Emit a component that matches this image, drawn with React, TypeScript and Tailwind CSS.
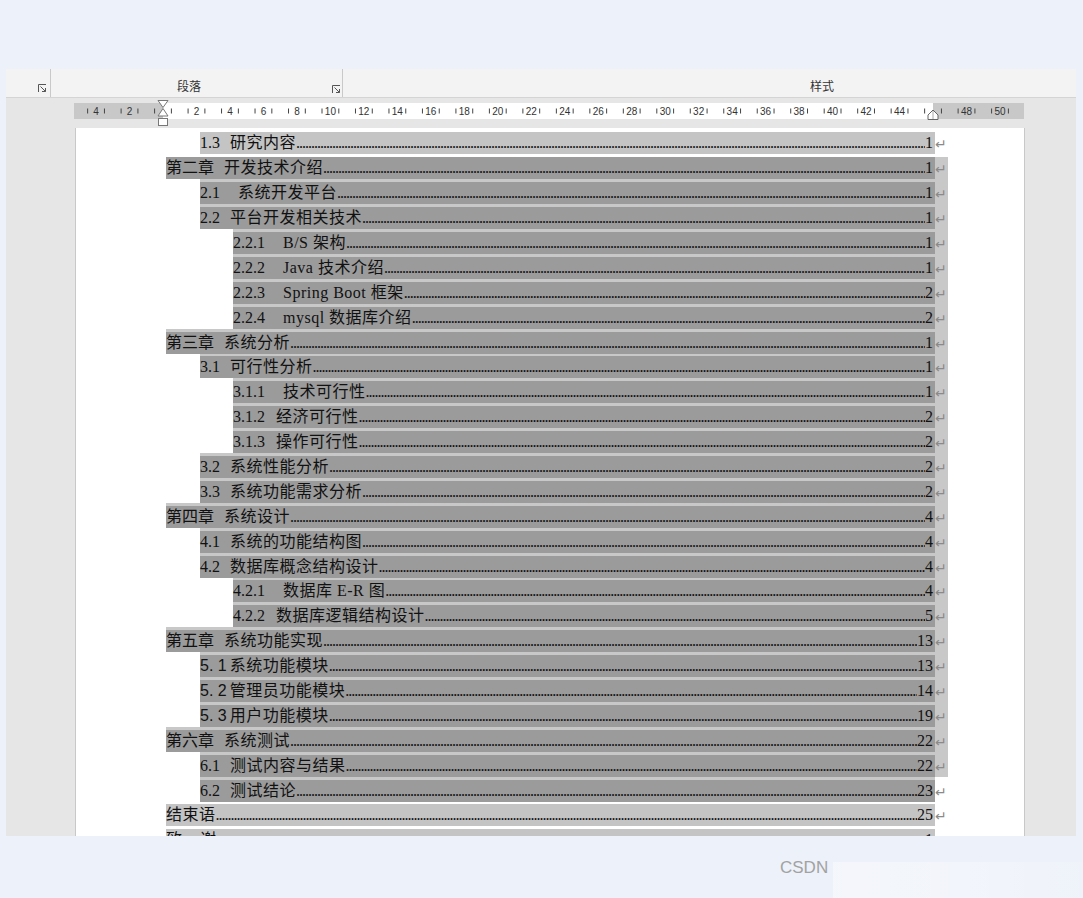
import React from 'react';

type Row = {
  lvl: 1 | 2 | 3;
  num?: string;
  gap?: string;
  sans?: boolean;
  title: string;
  page: string;
  band: 'dark' | 'light';
  top: 'white' | 'light';
  sel: boolean;
};

const rows: Row[] = [
  { lvl: 2, num: '1.3', gap: 'mr-[10px]', title: '研究内容', page: '1', band: 'light', top: 'white', sel: false },
  { lvl: 1, num: '第二章', gap: 'mr-[10px]', title: '开发技术介绍', page: '1', band: 'dark', top: 'white', sel: true },
  { lvl: 2, num: '2.1', gap: 'mr-[18px]', title: '系统开发平台', page: '1', band: 'dark', top: 'light', sel: true },
  { lvl: 2, num: '2.2', gap: 'mr-[10px]', title: '平台开发相关技术', page: '1', band: 'dark', top: 'light', sel: true },
  { lvl: 3, num: '2.2.1', gap: 'mr-[18px]', title: 'B/S 架构', page: '1', band: 'dark', top: 'light', sel: true },
  { lvl: 3, num: '2.2.2', gap: 'mr-[18px]', title: 'Java 技术介绍', page: '1', band: 'dark', top: 'light', sel: true },
  { lvl: 3, num: '2.2.3', gap: 'mr-[18px]', title: 'Spring Boot 框架', page: '2', band: 'dark', top: 'light', sel: true },
  { lvl: 3, num: '2.2.4', gap: 'mr-[18px]', title: 'mysql 数据库介绍', page: '2', band: 'dark', top: 'light', sel: true },
  { lvl: 1, num: '第三章', gap: 'mr-[10px]', title: '系统分析', page: '1', band: 'dark', top: 'light', sel: true },
  { lvl: 2, num: '3.1', gap: 'mr-[10px]', title: '可行性分析', page: '1', band: 'dark', top: 'light', sel: true },
  { lvl: 3, num: '3.1.1', gap: 'mr-[18px]', title: '技术可行性', page: '1', band: 'dark', top: 'light', sel: true },
  { lvl: 3, num: '3.1.2', gap: 'mr-[11px]', title: '经济可行性', page: '2', band: 'dark', top: 'light', sel: true },
  { lvl: 3, num: '3.1.3', gap: 'mr-[11px]', title: '操作可行性', page: '2', band: 'dark', top: 'light', sel: true },
  { lvl: 2, num: '3.2', gap: 'mr-[10px]', title: '系统性能分析', page: '2', band: 'dark', top: 'light', sel: true },
  { lvl: 2, num: '3.3', gap: 'mr-[10px]', title: '系统功能需求分析', page: '2', band: 'dark', top: 'light', sel: true },
  { lvl: 1, num: '第四章', gap: 'mr-[10px]', title: '系统设计', page: '4', band: 'dark', top: 'light', sel: true },
  { lvl: 2, num: '4.1', gap: 'mr-[10px]', title: '系统的功能结构图', page: '4', band: 'dark', top: 'light', sel: true },
  { lvl: 2, num: '4.2', gap: 'mr-[10px]', title: '数据库概念结构设计', page: '4', band: 'dark', top: 'light', sel: true },
  { lvl: 3, num: '4.2.1', gap: 'mr-[18px]', title: '数据库 E-R 图', page: '4', band: 'dark', top: 'light', sel: true },
  { lvl: 3, num: '4.2.2', gap: 'mr-[11px]', title: '数据库逻辑结构设计', page: '5', band: 'dark', top: 'light', sel: true },
  { lvl: 1, num: '第五章', gap: 'mr-[10px]', title: '系统功能实现', page: '13', band: 'dark', top: 'light', sel: true },
  { lvl: 2, num: '5. 1', gap: 'mr-[3px]', sans: true, title: '系统功能模块', page: '13', band: 'dark', top: 'light', sel: true },
  { lvl: 2, num: '5. 2', gap: 'mr-[3px]', sans: true, title: '管理员功能模块', page: '14', band: 'dark', top: 'light', sel: true },
  { lvl: 2, num: '5. 3', gap: 'mr-[3px]', sans: true, title: '用户功能模块', page: '19', band: 'dark', top: 'light', sel: true },
  { lvl: 1, num: '第六章', gap: 'mr-[10px]', title: '系统测试', page: '22', band: 'dark', top: 'light', sel: true },
  { lvl: 2, num: '6.1', gap: 'mr-[10px]', title: '测试内容与结果', page: '22', band: 'dark', top: 'light', sel: true },
  { lvl: 2, num: '6.2', gap: 'mr-[10px]', title: '测试结论', page: '23', band: 'dark', top: 'light', sel: false },
  { lvl: 1, title: '结束语', page: '25', band: 'light', top: 'white', sel: false },
  { lvl: 1, num: '致', gap: 'mr-[18px]', title: '谢', page: '1', band: 'light', top: 'white', sel: false },
];

const indent = { 1: 'ml-0', 2: 'ml-[34px]', 3: 'ml-[67px]' };
const dots = '.'.repeat(320);

function Launcher() {
  return (
    <svg width="10" height="10" viewBox="0 0 10 10" fill="none" stroke="#555" strokeWidth="1">
      <path d="M1.5 9V1.5H9" />
      <path d="M3.5 3.5L8.5 8.5" />
      <path d="M8.5 5V8.5H5" />
    </svg>
  );
}

function Ruler() {
  const step = 33.48;
  const ks = Array.from({ length: 28 }, (_, i) => i - 2);
  return (
    <svg width="950" height="16" viewBox="0 0 950 16" className="block">
      <rect x="0" y="0" width="950" height="16" fill="#ffffff" />
      <rect x="0" y="0" width="89" height="16" fill="#c8c8c8" />
      <rect x="859" y="0" width="91" height="16" fill="#c8c8c8" />
      {ks.map((k) => {
        const x = 89 + step * k;
        return (
          <g key={k}>
            <line x1={x - 8.4} x2={x - 8.4} y1="5.5" y2="10.5" stroke="#444" strokeWidth="1" />
            <line x1={x + 8.4} x2={x + 8.4} y1="5.5" y2="10.5" stroke="#444" strokeWidth="1" />
            {k !== 0 && k !== 23 && (
              <text x={x} y="11.5" textAnchor="middle" fontSize="10" fill="#333" fontFamily="Liberation Sans, Arial, sans-serif">
                {Math.abs(k * 2)}
              </text>
            )}
          </g>
        );
      })}
    </svg>
  );
}

function TocRow({ r }: { r: Row }) {
  const bandBg = r.band === 'dark' ? 'bg-[#9b9b9b]' : 'bg-[#c4c4c4]';
  const topBg = r.top === 'light' ? 'bg-[#c8c8c8]' : 'bg-white';
  return (
    <div className="flex h-[24.9px]">
      <div className={`flex min-w-0 flex-1 flex-col ${indent[r.lvl]}`}>
        <div className={`h-[2.9px] ${topBg}`} />
        <div className={`flex h-[22px] min-w-0 items-center leading-[22px] text-[16px] text-[#111] ${bandBg}`}>
          {r.num && (
            <span
              className={`shrink-0 whitespace-pre ${r.gap} ${
                r.sans ? "font-['Liberation_Sans','Noto_Sans_CJK_SC',sans-serif]" : ''
              }`}
            >
              {r.num}
            </span>
          )}
          <span className="shrink-0 whitespace-nowrap tracking-[0.5px]">{r.title}</span>
          <span className="w-0 min-w-0 flex-1 overflow-hidden whitespace-nowrap tracking-[-1px]">{dots}</span>
          <span className="shrink-0 pr-[2px]">{r.page}</span>
        </div>
      </div>
      <div className="flex w-[13px] shrink-0 flex-col">
        <div className={`h-[2.9px] ${r.sel && r.top === 'light' ? 'bg-[#c8c8c8]' : 'bg-white'}`} />
        <div
          className={`flex h-[22px] items-center pt-[2px] text-[14px] leading-none text-[#8a8a8a] font-['DejaVu_Sans',sans-serif] ${
            r.sel ? 'bg-[#c8c8c8]' : 'bg-white'
          }`}
        >
          ↵
        </div>
      </div>
    </div>
  );
}

export default function App() {
  return (
    <div className="h-[898px] w-full overflow-hidden bg-[#edf1f9] font-['Liberation_Serif','Noto_Sans_CJK_SC',serif]">
      <div className="h-[69px]" />
      <div className="ml-[6px] flex h-[767px] w-[1070px] flex-col overflow-hidden bg-[#e6e6e6]">
        {/* ribbon group labels */}
        <div className="flex h-[29px] border-b border-[#d4d4d4] bg-[#f3f3f3] font-['Noto_Sans_CJK_SC','Liberation_Sans',sans-serif] text-[12px] text-[#333]">
          <div className="flex w-[44px] items-end justify-end pb-[4px] pr-[3px]">
            <Launcher />
          </div>
          <div className="w-px bg-[#c9c9c9]" />
          <div className="flex w-[291px] justify-between">
            <span className="pl-[126px] pt-[9px] leading-[16px]">段落</span>
            <div className="flex items-end pb-[3px] pr-[1px]">
              <Launcher />
            </div>
          </div>
          <div className="w-px bg-[#c9c9c9]" />
          <div className="flex-1">
            <span className="block pl-[467px] pt-[9px] leading-[16px]">样式</span>
          </div>
        </div>

        {/* ruler */}
        <div className="relative h-[30px] pl-[68px] pt-[5px]">
          <Ruler />
          <svg className="absolute left-[151px] top-[1px]" width="12" height="29" viewBox="0 0 12 29">
            <path d="M1 1.5H11L6 8.5Z" fill="#fff" stroke="#777" strokeWidth="1" />
            <path d="M6 9.5L11 17H1Z" fill="#fff" stroke="#777" strokeWidth="1" />
            <rect x="1.5" y="19.5" width="9" height="7" fill="#fff" stroke="#777" strokeWidth="1" />
          </svg>
          <svg className="absolute left-[921px] top-[11px]" width="12" height="11" viewBox="0 0 12 11">
            <path d="M1 10.5V6L6 1L11 6V10.5Z" fill="#fff" stroke="#666" strokeWidth="1" />
            <path d="M6 2V10" stroke="#aaa" strokeWidth="1" />
          </svg>
        </div>

        {/* page */}
        <div className="flex-1 overflow-hidden pl-[69px]">
          <div className="h-full w-[950px] border-x border-[#c8c8c8] bg-white pl-[90px] pt-[1.5px]">
            <div className="w-[782px]">
              {rows.map((r, i) => (
                <TocRow key={i} r={r} />
              ))}
            </div>
          </div>
        </div>
      </div>

      {/* watermark */}
      <div className="flex h-[62px]">
        <div className="flex items-center pl-[780px] pt-[2px] font-['Liberation_Sans',sans-serif] text-[17px] text-[#a2a2a2]">
          CSDN
        </div>
        <div className="ml-[5px] mt-[26px] h-[36px] flex-1 bg-gradient-to-r from-white/40 via-white/30 to-white/10" />
      </div>
    </div>
  );
}
